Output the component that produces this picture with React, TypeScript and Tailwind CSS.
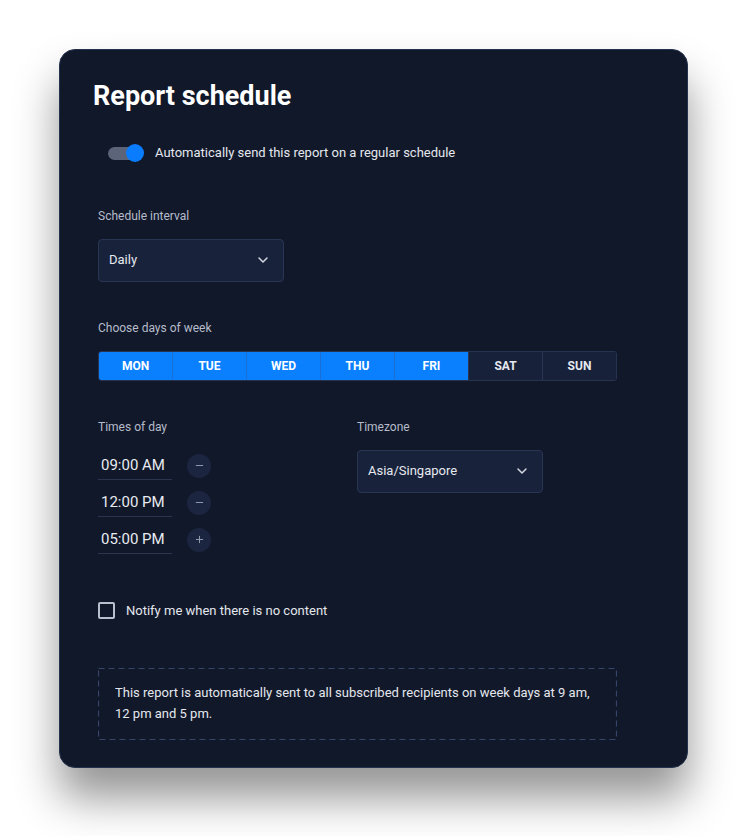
import { ChevronDown, Minus, Plus } from "lucide-react";

const days = [
  { label: "MON", on: true },
  { label: "TUE", on: true },
  { label: "WED", on: true },
  { label: "THU", on: true },
  { label: "FRI", on: true },
  { label: "SAT", on: false },
  { label: "SUN", on: false },
];

const times = [
  { value: "09:00 AM", add: false },
  { value: "12:00 PM", add: false },
  { value: "05:00 PM", add: true },
];

function Select({ value, width }: { value: string; width: string }) {
  return (
    <div
      className={`${width} h-[43px] flex items-center justify-between pl-[10px] pr-[12px] rounded-[4px] bg-[#18223b] border border-[#2a3553] text-[13px] text-[#e6e9f0]`}
    >
      <span>{value}</span>
      <ChevronDown size={16} strokeWidth={2.2} className="text-[#d5d9e3]" />
    </div>
  );
}

export default function App() {
  return (
    <div
      className="min-h-screen bg-white pt-[49px] pl-[59px]"
      style={{ fontFamily: "Roboto, 'Noto Sans', sans-serif" }}
    >
      <div className="w-[629px] h-[719px] rounded-[16px] bg-[#111829] border border-[#24324d] shadow-[0_30px_44px_rgba(0,0,0,0.42)] pt-[30px] px-[33px]">
        <h1 className="text-[27px] font-bold text-white leading-[32px]">Report schedule</h1>

        <div className="ml-[5px] w-[519px]">
          <div className="flex items-center mt-[31px] ml-[10px] gap-[11px]">
            <div className="relative w-[36px] h-[18px]">
              <div className="absolute left-0 top-[3px] w-[32px] h-[13px] rounded-full bg-[#5b6479]" />
              <div className="absolute right-0 top-0 w-[18px] h-[18px] rounded-full bg-[#0a7cff]" />
            </div>
            <span className="text-[13px] text-[#e4e7ee]">Automatically send this report on a regular schedule</span>
          </div>

          <div className="mt-[45px] text-[12px] text-[#b6bccb] leading-[16px]">Schedule interval</div>
          <div className="mt-[15px]">
            <Select value="Daily" width="w-[186px]" />
          </div>

          <div className="mt-[38px] text-[12px] text-[#b6bccb] leading-[16px]">Choose days of week</div>
          <div className="mt-[15px] flex h-[30px] rounded-[3px] overflow-hidden border border-[#26324e]">
            {days.map((d, i) => (
              <div
                key={d.label}
                className={`flex-1 flex items-center justify-center text-[12px] font-bold ${
                  d.on ? "bg-[#0a80ff] text-white" : "bg-[#18213a] text-[#e6e9f0]"
                } ${i > 0 ? (d.on ? "border-l border-[#1a6fd6]" : "border-l border-[#2a3553]") : ""}`}
              >
                {d.label}
              </div>
            ))}
          </div>

          <div className="mt-[38px] flex">
            <div className="w-[259px]">
              <div className="text-[12px] text-[#b6bccb] leading-[16px]">Times of day</div>
              <div className="mt-[17px] flex flex-col gap-[9px]">
                {times.map((t) => (
                  <div key={t.value} className="flex items-center">
                    <div className="w-[74px] h-[28px] border-b border-[#2b3550] pl-[3px] text-[15px] text-[#e8ebf1] leading-[26px]">
                      {t.value}
                    </div>
                    <div className="ml-[15px] w-[24px] h-[24px] rounded-full bg-[#1b2540] flex items-center justify-center text-[#9aa2b5]">
                      {t.add ? <Plus size={11} strokeWidth={2} /> : <Minus size={11} strokeWidth={2} />}
                    </div>
                  </div>
                ))}
              </div>
            </div>
            <div>
              <div className="text-[12px] text-[#b6bccb] leading-[16px]">Timezone</div>
              <div className="mt-[15px]">
                <Select value="Asia/Singapore" width="w-[186px]" />
              </div>
            </div>
          </div>

          <div className="mt-[47px] flex items-center gap-[11px]">
            <div className="w-[17px] h-[17px] rounded-[2px] border-2 border-[#b9bfcc]" />
            <span className="text-[13px] text-[#e4e7ee]">Notify me when there is no content</span>
          </div>

          <div className="relative mt-[48px] h-[72px] px-[17px] pt-[14px] text-[13px] leading-[21px] text-[#e4e7ee]">
            <svg className="absolute inset-0 w-full h-full pointer-events-none" preserveAspectRatio="none">
              <rect
                x="0.5"
                y="0.5"
                width="518"
                height="71"
                fill="none"
                stroke="#37456a"
                strokeWidth="1.2"
                strokeDasharray="6 4"
              />
            </svg>
            This report is automatically sent to all subscribed recipients on week days at 9 am, 12 pm and 5 pm.
          </div>
        </div>
      </div>
    </div>
  );
}
